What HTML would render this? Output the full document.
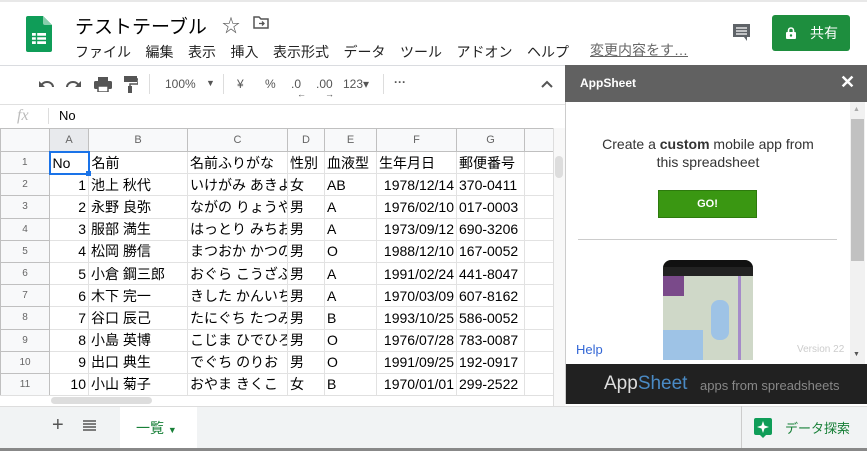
<!DOCTYPE html>
<html><head><meta charset="utf-8"><style>
*{margin:0;padding:0;box-sizing:border-box}
body{width:867px;height:451px;overflow:hidden;background:#fff;font-family:"Liberation Sans","Noto Sans CJK JP",sans-serif;position:relative;color:#222}
.a{position:absolute}
.menu span{margin-right:14.5px}
table{border-collapse:collapse;position:absolute;left:0;top:128px;table-layout:fixed;width:553px}
td{border:1px solid #e2e2e2;height:22.2px;font-size:14px;white-space:nowrap;overflow:hidden;padding:0 2px;color:#000}
td.rh{background:#f8f9fa;color:#666;font-size:10px;text-align:center;border-color:#c0c0c0}
tr.ch td{background:#f8f9fa;color:#666;font-size:11px;text-align:center;height:23px;border-color:#c0c0c0}
td.r{text-align:right}
.tb{color:#555;font-size:12px}
</style></head><body>
<div class="a" style="left:0;top:0;width:867px;height:2px;background:#e8e8e8"></div>
<svg class="a" style="left:26px;top:16px" width="26" height="36" viewBox="0 0 26 36"><path d="M2 0h15l9 9v25a2 2 0 0 1-2 2H2a2 2 0 0 1-2-2V2a2 2 0 0 1 2-2z" fill="#0f9d58"/><path d="M17 0l9 9h-7a2 2 0 0 1-2-2z" fill="#87ceac"/><rect x="6" y="17" width="14" height="11" fill="#fff"/><path d="M6 20.5h14M6 24.5h14M10.5 17v11" stroke="#0f9d58" stroke-width="1.4"/></svg>
<div class="a" style="left:75px;top:12px;font-size:19px;color:#000">テストテーブル</div>
<div class="a" style="left:222px;top:12px;font-size:18px;color:#555">☆</div>
<svg class="a" style="left:253px;top:16px" width="16" height="13"><path d="M1 1h5l2 2h7v9H1z" fill="none" stroke="#555" stroke-width="1.5"/><path d="M6 7.5h5M9 5.5l2 2-2 2" stroke="#555" stroke-width="1.3" fill="none"/></svg>
<div class="a menu" style="left:75px;top:42px;font-size:14px;color:#222;white-space:nowrap"><span>ファイル</span><span>編集</span><span>表示</span><span>挿入</span><span>表示形式</span><span>データ</span><span>ツール</span><span>アドオン</span><span>ヘルプ</span></div>
<div class="a" style="left:590px;top:40px;font-size:14px;color:#666;text-decoration:underline">変更内容をす…</div>
<svg class="a" style="left:731px;top:23px" width="21" height="20"><path d="M2 1h17v13h-3v4l-3-4H2z" fill="#5f6368"/><path d="M5 5h11M5 8h11M5 11h11" stroke="#fff" stroke-width="1.3"/></svg>
<div class="a" style="left:772px;top:15px;width:78px;height:36px;background:#1e8e3e;border-radius:3px;color:#fff;font-size:14px;line-height:36px;padding-left:38px">共有</div>
<svg class="a" style="left:786px;top:27px" width="10" height="12"><rect x="0" y="5" width="10" height="7" rx="1" fill="#fff"/><path d="M2.5 5V3.5a2.5 2.5 0 0 1 5 0V5" stroke="#fff" stroke-width="1.6" fill="none"/><circle cx="5" cy="8.5" r="1.2" fill="#1e8e3e"/></svg>
<div class="a" style="left:0;top:65px;width:565px;height:1px;background:#dadce0"></div>
<svg class="a" style="left:38px;top:78px" width="48" height="12"><path d="M3 9a6 5 0 0 1 12 0" stroke="#555" stroke-width="2" fill="none"/><path d="M1 3v6h6z" fill="#555"/><path d="M29 9a6 5 0 0 1 12 0" stroke="#555" stroke-width="2" fill="none"/><path d="M43 3v6h-6z" fill="#555"/></svg>
<svg class="a" style="left:94px;top:77px" width="18" height="15"><rect x="0" y="4" width="18" height="8" rx="1.5" fill="#555"/><rect x="4" y="0" width="10" height="4" fill="#555"/><rect x="4" y="9" width="10" height="6" fill="#fff" stroke="#555" stroke-width="1.5"/></svg>
<svg class="a" style="left:124px;top:76px" width="14" height="17"><rect x="0" y="0" width="13" height="6" fill="#555"/><path d="M13 3h1v5H6v2" stroke="#555" stroke-width="1.5" fill="none"/><rect x="4" y="10" width="4" height="7" fill="#555"/></svg>
<div class="a" style="left:149px;top:74px;width:1px;height:20px;background:#ddd"></div>
<div class="a tb" style="left:165px;top:77px">100%</div>
<div class="a tb" style="left:206px;top:78px;font-size:9px">▼</div>
<div class="a" style="left:223px;top:74px;width:1px;height:20px;background:#ddd"></div>
<div class="a tb" style="left:237px;top:77px">¥</div>
<div class="a tb" style="left:265px;top:77px">%</div>
<div class="a tb" style="left:291px;top:77px">.0</div>
<div class="a tb" style="left:297px;top:89px;font-size:9px">←</div>
<div class="a tb" style="left:316px;top:77px">.00</div>
<div class="a tb" style="left:325px;top:89px;font-size:9px">→</div>
<div class="a tb" style="left:343px;top:77px">123▾</div>
<div class="a" style="left:383px;top:74px;width:1px;height:20px;background:#ddd"></div>
<div class="a tb" style="left:394px;top:75px;font-weight:bold">···</div>
<svg class="a" style="left:541px;top:80px" width="12" height="8"><path d="M1 7l5-5 5 5" stroke="#555" stroke-width="2" fill="none"/></svg>
<div class="a" style="left:0;top:104px;width:565px;height:1px;background:#e0e0e0"></div>
<div class="a" style="left:17px;top:107px;font-family:'Liberation Serif',serif;font-style:italic;color:#bbb;font-size:16px">fx</div>
<div class="a" style="left:48px;top:108px;width:1px;height:16px;background:#ddd"></div>
<div class="a" style="left:59px;top:108px;font-size:13px;color:#000">No</div>
<table>
<colgroup><col style="width:49px"><col style="width:39px"><col style="width:99px"><col style="width:100px"><col style="width:37px"><col style="width:52px"><col style="width:80px"><col style="width:68px"><col style="width:29px"></colgroup>
<tr class="ch"><td></td><td style="background:#e8eaed">A</td><td>B</td><td>C</td><td>D</td><td>E</td><td>F</td><td>G</td><td></td></tr>
<tr><td class="rh">1</td><td style="border:2px solid #1a73e8">No</td><td>名前</td><td>名前ふりがな</td><td>性別</td><td>血液型</td><td>生年月日</td><td>郵便番号</td><td></td></tr>
<tr><td class="rh">2</td><td class="r">1</td><td>池上 秋代</td><td>いけがみ あきよ</td><td>女</td><td>AB</td><td class="r">1978/12/14</td><td>370-0411</td><td></td></tr>
<tr><td class="rh">3</td><td class="r">2</td><td>永野 良弥</td><td>ながの りょうや</td><td>男</td><td>A</td><td class="r">1976/02/10</td><td>017-0003</td><td></td></tr>
<tr><td class="rh">4</td><td class="r">3</td><td>服部 満生</td><td>はっとり みちお</td><td>男</td><td>A</td><td class="r">1973/09/12</td><td>690-3206</td><td></td></tr>
<tr><td class="rh">5</td><td class="r">4</td><td>松岡 勝信</td><td>まつおか かつの</td><td>男</td><td>O</td><td class="r">1988/12/10</td><td>167-0052</td><td></td></tr>
<tr><td class="rh">6</td><td class="r">5</td><td>小倉 鋼三郎</td><td>おぐら こうざぶ</td><td>男</td><td>A</td><td class="r">1991/02/24</td><td>441-8047</td><td></td></tr>
<tr><td class="rh">7</td><td class="r">6</td><td>木下 完一</td><td>きした かんいち</td><td>男</td><td>A</td><td class="r">1970/03/09</td><td>607-8162</td><td></td></tr>
<tr><td class="rh">8</td><td class="r">7</td><td>谷口 辰己</td><td>たにぐち たつみ</td><td>男</td><td>B</td><td class="r">1993/10/25</td><td>586-0052</td><td></td></tr>
<tr><td class="rh">9</td><td class="r">8</td><td>小島 英博</td><td>こじま ひでひろ</td><td>男</td><td>O</td><td class="r">1976/07/28</td><td>783-0087</td><td></td></tr>
<tr><td class="rh">10</td><td class="r">9</td><td>出口 典生</td><td>でぐち のりお</td><td>男</td><td>O</td><td class="r">1991/09/25</td><td>192-0917</td><td></td></tr>
<tr><td class="rh">11</td><td class="r">10</td><td>小山 菊子</td><td>おやま きくこ</td><td>女</td><td>B</td><td class="r">1970/01/01</td><td>299-2522</td><td></td></tr>
</table>
<div class="a" style="left:86px;top:171px;width:5px;height:5px;background:#1a73e8"></div>
<div class="a" style="left:553px;top:128px;width:12px;height:278px;background:#f8f8f8;border-left:1px solid #ddd"></div>
<div class="a" style="left:555px;top:156px;width:8px;height:22px;background:#ddd;border-radius:4px"></div>
<div class="a" style="left:0;top:395px;width:553px;height:11px;background:#fff;border-top:1px solid #e0e0e0"></div>
<div class="a" style="left:51px;top:397px;width:101px;height:7px;background:#ddd;border-radius:4px"></div>
<div class="a" style="left:0;top:406px;width:867px;height:45px;background:#f1f3f4;border-top:1px solid #ddd"></div>
<div class="a" style="left:52px;top:414px;font-size:20px;color:#555">+</div>
<svg class="a" style="left:83px;top:420px" width="13" height="11"><path d="M0 1h13M0 4h13M0 7h13M0 10h13" stroke="#555" stroke-width="1.6"/></svg>
<div class="a" style="left:120px;top:407px;width:77px;height:44px;background:#fff"></div>
<div class="a" style="left:136px;top:418px;font-size:14px;color:#188038">一覧 <span style="font-size:9px">▼</span></div>
<div class="a" style="left:741px;top:406px;width:1px;height:43px;background:#ccc"></div>
<svg class="a" style="left:754px;top:418px" width="18" height="20"><path d="M2 0h14a2 2 0 0 1 2 2v13a2 2 0 0 1-2 2h-4l-3 3-3-3H2a2 2 0 0 1-2-2V2a2 2 0 0 1 2-2z" fill="#0f9d58"/><path d="M9 3l1.5 4.5L15 9l-4.5 1.5L9 15l-1.5-4.5L3 9l4.5-1.5z" fill="#fff"/></svg>
<div class="a" style="left:785px;top:418px;font-size:13px;color:#188038">データ探索</div>
<div class="a" style="left:0;top:448px;width:867px;height:3px;background:#888"></div>
<div class="a" style="left:565px;top:65px;width:302px;height:37px;background:#616161"></div>
<div class="a" style="left:580px;top:76px;color:#fff;font-weight:bold;font-size:12px">AppSheet</div>
<div class="a" style="left:840px;top:72px;color:#fff;font-size:18px;font-weight:bold">✕</div>
<div class="a" style="left:565px;top:102px;width:1px;height:302px;background:#ccc"></div>
<div class="a" style="left:850px;top:102px;width:15px;height:262px;background:#f1f1f1"></div>
<div class="a" style="left:851px;top:119px;width:13px;height:142px;background:#c1c1c1"></div>
<div class="a" style="left:853px;top:106px;font-size:7px;color:#aaa">▲</div>
<div class="a" style="left:853px;top:351px;font-size:7px;color:#555">▼</div>
<div class="a" style="left:566px;top:135px;width:284px;text-align:center;font-size:14px;color:#333;line-height:18px">Create a <b>custom</b> mobile app from<br>this spreadsheet</div>
<div class="a" style="left:658px;top:190px;width:99px;height:28px;background:#3a9712;border:1px solid #2d7a0d;color:#fff;font-size:11px;font-weight:bold;text-align:center;line-height:27px">GO!</div>
<div class="a" style="left:578px;top:239px;width:259px;height:1px;background:#ccc"></div>
<div class="a" style="left:663px;top:260px;width:90px;height:100px;background:#cfd8c8;border-radius:8px 8px 0 0;overflow:hidden">
<div style="height:7px;background:#111"></div><div style="height:9px;background:#222"></div>
<div style="position:absolute;left:0;top:16px;width:21px;height:20px;background:#7a4a8a"></div>
<div style="position:absolute;left:48px;top:40px;width:18px;height:40px;background:#9ec3e6;border-radius:8px"></div>
<div style="position:absolute;left:0;top:70px;width:40px;height:30px;background:#9ec3e6"></div>
<div style="position:absolute;left:75px;top:16px;width:3px;height:84px;background:#a58bc9"></div>
</div>
<div class="a" style="left:576px;top:342px;color:#3367d6;font-size:13px">Help</div>
<div class="a" style="left:797px;top:344px;color:#ccc;font-size:10px">Version 22</div>
<div class="a" style="left:566px;top:364px;width:301px;height:40px;background:#212121"></div>
<div class="a" style="left:604px;top:373px;font-size:19px;color:#ddd">App<span style="color:#4a8ac4">Sheet</span></div>
<div class="a" style="left:700px;top:378px;font-size:13px;color:#888">apps from spreadsheets</div>
</body></html>
